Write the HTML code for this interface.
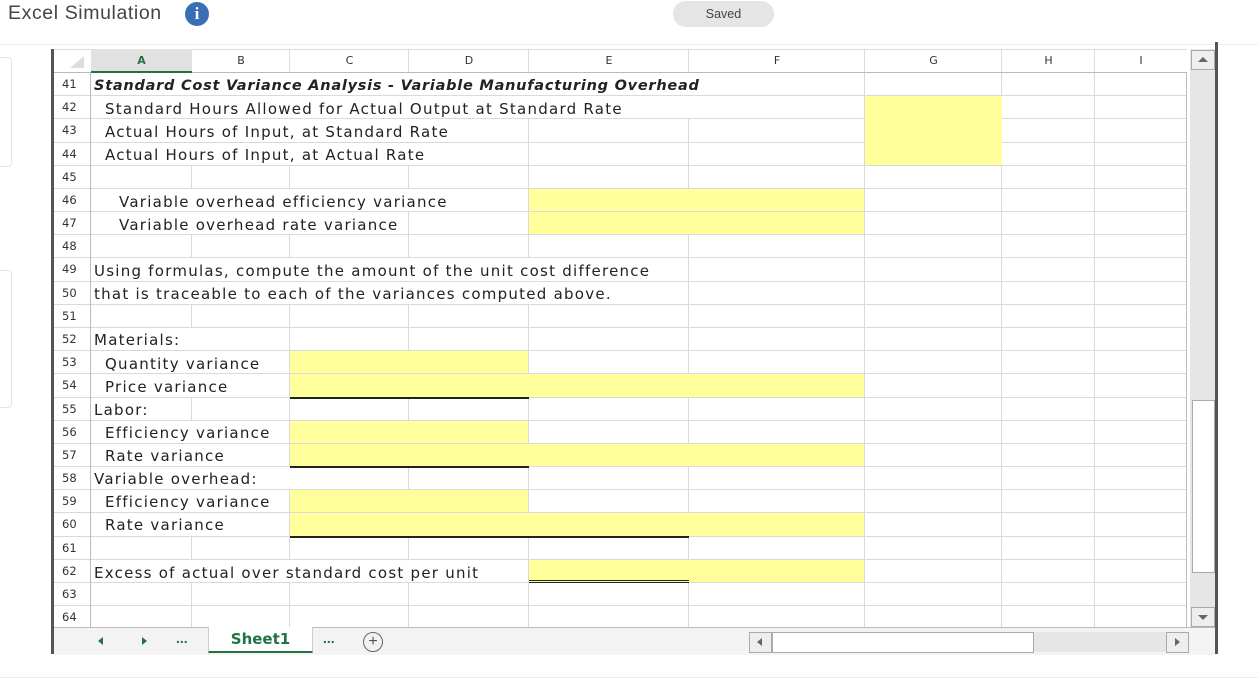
<!DOCTYPE html>
<html><head><meta charset="utf-8"><style>
body{margin:0;width:1258px;height:685px;background:#fff;position:relative;overflow:hidden;font-family:"DejaVu Sans","Liberation Sans",sans-serif;}
.a{position:absolute}
.t{position:absolute;font-size:15px;letter-spacing:1.25px;color:#222;white-space:nowrap;line-height:23px}
.rn{position:absolute;left:62px;font-size:11.5px;color:#333;line-height:23px}
.ch{position:absolute;top:49px;height:23px;line-height:23px;text-align:center;font-size:11px;color:#333}
</style></head><body>
<div class="a" style="left:8px;top:1px;font-size:19.5px;letter-spacing:0.6px;color:#444;font-family:'Liberation Sans',sans-serif;line-height:24px">Excel Simulation</div>
<div class="a" style="left:185px;top:2px;width:24px;height:24px;border-radius:50%;background:#3a6fb5;color:#fff;text-align:center;font:bold 17px/24px 'Liberation Serif',serif">i</div>
<div class="a" style="left:673px;top:1px;width:101px;height:26px;border-radius:13px;background:#e5e5e5;color:#444;text-align:center;font:12.5px/26px 'Liberation Sans',sans-serif">Saved</div>
<div class="a" style="left:0;top:44px;width:1258px;height:1px;background:#eee"></div>
<div class="a" style="left:0;top:677px;width:1258px;height:1px;background:#eee"></div>
<div class="a" style="left:-8px;top:57px;width:18px;height:108px;border:1px solid #e4e4e4;border-radius:4px"></div>
<div class="a" style="left:-8px;top:270px;width:18px;height:136px;border:1px solid #e4e4e4;border-radius:4px"></div>
<div id="g"></div>
<div class="a" style="left:51px;top:49px;width:3px;height:605px;background:#555"></div>
<div class="a" style="left:1215px;top:42px;width:3px;height:612px;background:#555"></div>
<div class="a" style="left:91px;top:49px;width:101px;height:22px;background:#e1e1e1;border-bottom:2px solid #217346"></div>
<div class="a" style="left:70px;top:56px;width:0;height:0;border-left:14px solid transparent;border-bottom:12px solid #ddd"></div>
<div class="ch" style="left:91px;width:101px;color:#217346;font-weight:bold">A</div>
<div class="ch" style="left:192px;width:98px">B</div>
<div class="ch" style="left:290px;width:119px">C</div>
<div class="ch" style="left:409px;width:120px">D</div>
<div class="ch" style="left:529px;width:160px">E</div>
<div class="ch" style="left:689px;width:176px">F</div>
<div class="ch" style="left:865px;width:137px">G</div>
<div class="ch" style="left:1002px;width:93px">H</div>
<div class="ch" style="left:1095px;width:92px">I</div>
<div class="t" style="left:94px;top:75px;font-weight:bold;font-style:italic;font-size:14.5px;letter-spacing:0.75px">Standard Cost Variance Analysis - Variable Manufacturing Overhead</div>
<div class="t" style="left:105px;top:98px">Standard Hours Allowed for Actual Output at Standard Rate</div>
<div class="t" style="left:105px;top:121px">Actual Hours of Input, at Standard Rate</div>
<div class="t" style="left:105px;top:144px">Actual Hours of Input, at Actual Rate</div>
<div class="t" style="left:119px;top:191px">Variable overhead efficiency variance</div>
<div class="t" style="left:119px;top:214px">Variable overhead rate variance</div>
<div class="t" style="left:94px;top:260px">Using formulas, compute the amount of the unit cost difference</div>
<div class="t" style="left:94px;top:283px">that is traceable to each of the variances computed above.</div>
<div class="t" style="left:94px;top:329px">Materials:</div>
<div class="t" style="left:105px;top:353px">Quantity variance</div>
<div class="t" style="left:105px;top:376px">Price variance</div>
<div class="t" style="left:94px;top:399px">Labor:</div>
<div class="t" style="left:105px;top:422px">Efficiency variance</div>
<div class="t" style="left:105px;top:445px">Rate variance</div>
<div class="t" style="left:94px;top:468px">Variable overhead:</div>
<div class="t" style="left:105px;top:491px">Efficiency variance</div>
<div class="t" style="left:105px;top:514px">Rate variance</div>
<div class="t" style="left:94px;top:562px">Excess of actual over standard cost per unit</div>
<div class="a" style="left:54px;top:627px;width:1161px;height:27px;background:#f3f3f3;border-top:1px solid #bbb"></div>
<div class="a" style="left:98px;top:637px;width:0;height:0;border-top:4px solid transparent;border-bottom:4px solid transparent;border-right:5px solid #217346"></div>
<div class="a" style="left:142px;top:637px;width:0;height:0;border-top:4px solid transparent;border-bottom:4px solid transparent;border-left:5px solid #217346"></div>
<div class="a" style="left:176px;top:630px;font:bold 14px 'Liberation Sans',sans-serif;color:#217346">...</div>
<div class="a" style="left:208px;top:627px;width:103px;height:24px;background:#fff;border-left:1px solid #ccc;border-right:1px solid #ccc;border-bottom:2px solid #217346;text-align:center;font:bold 15px/24px 'DejaVu Sans',sans-serif;color:#217346">Sheet1</div>
<div class="a" style="left:323px;top:630px;font:bold 14px 'Liberation Sans',sans-serif;color:#217346">...</div>
<div class="a" style="left:363px;top:632px;width:18px;height:18px;border:1.5px solid #666;border-radius:50%;text-align:center;font:16px/18px 'Liberation Sans',sans-serif;color:#555">+</div>
<div class="a" style="left:749px;top:632px;width:439px;height:20px;background:#e6e6e6"></div>
<div class="a" style="left:749px;top:632px;width:21px;height:19px;background:#eee;border:1px solid #aaa"></div>
<div class="a" style="left:757px;top:638px;width:0;height:0;border-top:4px solid transparent;border-bottom:4px solid transparent;border-right:5px solid #666"></div>
<div class="a" style="left:772px;top:632px;width:260px;height:19px;background:#fff;border:1px solid #aaa"></div>
<div class="a" style="left:1166px;top:632px;width:21px;height:19px;background:#eee;border:1px solid #aaa"></div>
<div class="a" style="left:1175px;top:638px;width:0;height:0;border-top:4px solid transparent;border-bottom:4px solid transparent;border-left:5px solid #666"></div>
<div class="a" style="left:1190px;top:49px;width:25px;height:578px;background:#e6e6e6"></div>
<div class="a" style="left:1191px;top:50px;width:22px;height:18px;background:#eee;border:1px solid #aaa"></div>
<div class="a" style="left:1198px;top:57px;width:0;height:0;border-left:5px solid transparent;border-right:5px solid transparent;border-bottom:5px solid #666"></div>
<div class="a" style="left:1192px;top:400px;width:21px;height:171px;background:#fff;border:1px solid #aaa"></div>
<div class="a" style="left:1191px;top:607px;width:22px;height:18px;background:#eee;border:1px solid #aaa"></div>
<div class="a" style="left:1198px;top:615px;width:0;height:0;border-left:5px solid transparent;border-right:5px solid transparent;border-top:5px solid #666"></div>
<script>
var g=document.getElementById('g'),h='';
var cols=[91,192,290,409,529,689,865,1002,1095,1187];
function T(r){return Math.round(73+(r-41)*23.18);}
function box(l,t,w,hh,c){h+='<div class="a" style="left:'+l+'px;top:'+t+'px;width:'+w+'px;height:'+hh+'px;background:'+c+'"></div>';}
function Y(c1,c2,r1,r2){box(cols[c1],T(r1),cols[c2]-cols[c1],T(r2+1)-T(r1),'#ffff9c');}
Y(6,7,42,44);Y(4,6,46,47);Y(2,4,53,53);Y(2,6,54,54);Y(2,4,56,56);Y(2,6,57,57);Y(2,4,59,59);Y(2,6,60,60);Y(4,6,62,62);
for(var r=41;r<=64;r++){box(54,T(r+1)-1,1133,1,'#dadada');}
var spill={41:[1,2,3,4,5],42:[1,2,3,4,5],43:[1,2,3],44:[1,2,3],46:[1,2,3,5],47:[1,2,5],49:[1,2,3,4],50:[1,2,3,4],52:[1],53:[1,3],54:[1,3,4,5],56:[1,3],57:[1,3,4,5],58:[1,2],59:[1,3],60:[1,3,4,5],62:[1,2,3,5]};
for(var r=41;r<=64;r++){var s=spill[r]||[];for(var c=0;c<cols.length;c++){if(s.indexOf(c)>=0)continue;var x=cols[c];box(x-1,T(r),1,T(r+1)-T(r),c==0||c==9?'#bbb':'#dadada');}}
box(54,49,1133,1,'#ddd');box(54,72,1133,1,'#bbb');
for(var c=1;c<9;c++)box(cols[c]-1,50,1,22,'#ddd');
box(865,T(42),137,T(45)-T(42)-1,'#ffff9c');
for(var r=41;r<=64;r++){h+='<div class="rn" style="top:'+T(r)+'px">'+r+'</div>';}
box(290,T(55)-1,239,1.5,'#222');box(290,T(58)-1,239,1.5,'#222');box(290,T(61)-1,399,1.5,'#222');
box(529,T(63)-3,160,1,'#222');box(529,T(63)-1,160,1,'#222');
g.innerHTML=h;
</script>
</body></html>
